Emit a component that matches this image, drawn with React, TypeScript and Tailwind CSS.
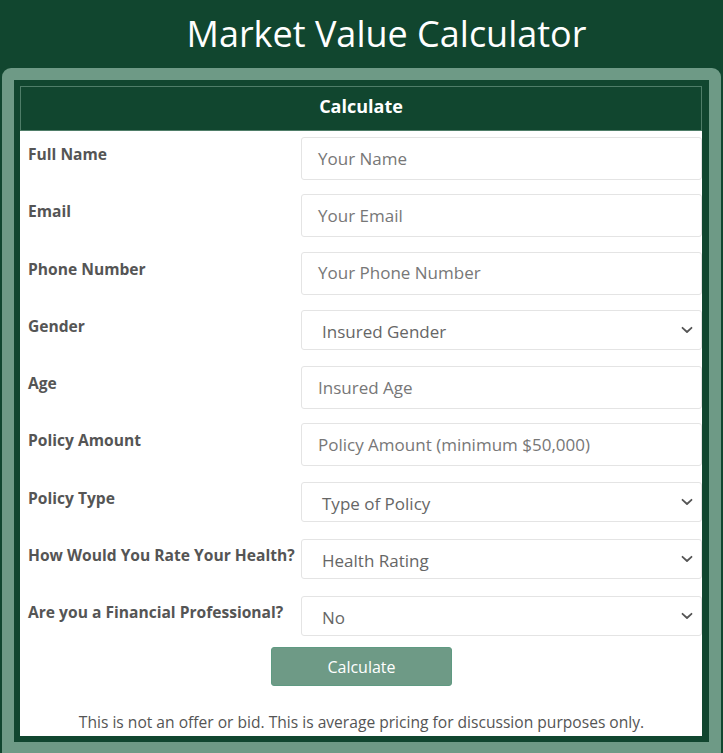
import type { ReactNode } from "react";

type Field = {
  label: string;
  kind: "input" | "select";
  text: string;
};

const fields: Field[] = [
  { label: "Full Name", kind: "input", text: "Your Name" },
  { label: "Email", kind: "input", text: "Your Email" },
  { label: "Phone Number", kind: "input", text: "Your Phone Number" },
  { label: "Gender", kind: "select", text: "Insured Gender" },
  { label: "Age", kind: "input", text: "Insured Age" },
  { label: "Policy Amount", kind: "input", text: "Policy Amount (minimum $50,000)" },
  { label: "Policy Type", kind: "select", text: "Type of Policy" },
  { label: "How Would You Rate Your Health?", kind: "select", text: "Health Rating" },
  { label: "Are you a Financial Professional?", kind: "select", text: "No" }
];

function Chevron() {
  return (
    <svg width="12" height="8" viewBox="0 0 12 8" fill="none" className="shrink-0">
      <path d="M1.5 1.8 6 6 10.5 1.8" stroke="#555" strokeWidth="1.8" strokeLinecap="round" strokeLinejoin="round" />
    </svg>
  );
}

function Row({ field, last }: { field: Field; last: boolean }) {
  let control: ReactNode;

  if (field.kind === "input") {
    control = (
      <div className="flex h-[43px] w-[401px] items-center rounded-[3px] border border-[#e4e4e4] bg-white pl-[16px] text-[17px] text-[#777]">
        {field.text}
      </div>
    );
  } else {
    control = (
      <div className="mt-[1px] flex h-[40px] w-[401px] items-center justify-between rounded-[3px] border border-[#e4e4e4] bg-white pl-[20px] pr-[8px] text-[17px] text-[#666]">
        <span className="pt-[3px]">{field.text}</span>
        <Chevron />
      </div>
    );
  }

  return (
    <div className={`flex items-start justify-between ${last ? "" : "h-[57.3px]"}`}>
      <p className="pl-[7px] pt-[7px] text-[15.6px] font-bold leading-5 text-[#555]">{field.label}</p>
      {control}
    </div>
  );
}

export default function App() {
  return (
    <main
      className="flex h-[753px] w-[723px] flex-col overflow-hidden bg-[#11462f]"
      style={{ fontFamily: '"Open Sans", "Noto Sans", sans-serif' }}
    >
      <h1 className="flex h-[68px] shrink-0 items-center justify-center pb-[1px] pl-[50px] text-[36px] leading-none text-white">
        Market Value Calculator
      </h1>

      <div className="mx-[2px] flex flex-1 flex-col rounded-t-[9px] bg-[#6e9a86] px-[12px] pb-[11px] pt-[12px]">
        <div className="flex flex-1 flex-col bg-[#11462f] p-[6px] pr-[7px]">
          <div className="flex h-[45px] shrink-0 items-center justify-center border border-[#4f7d68] pb-[5px] text-[18px] font-bold text-white">
            Calculate
          </div>

          <div className="flex-1 bg-white pl-[1px] pt-[6px]">
            {fields.map((field, index) => (
              <Row key={field.label} field={field} last={index === fields.length - 1} />
            ))}

            <div className="mt-[11px] flex justify-center">
              <button
                type="button"
                className="h-[39px] w-[181px] rounded-[3px] border border-[#5f9a82] bg-[#6e9a86] text-[16px] text-white"
              >
                Calculate
              </button>
            </div>

            <p className="mt-[26px] text-center text-[15.6px] leading-5 text-[#555]">
              This is not an offer or bid. This is average pricing for discussion purposes only.
            </p>
          </div>
        </div>
      </div>
    </main>
  );
}
